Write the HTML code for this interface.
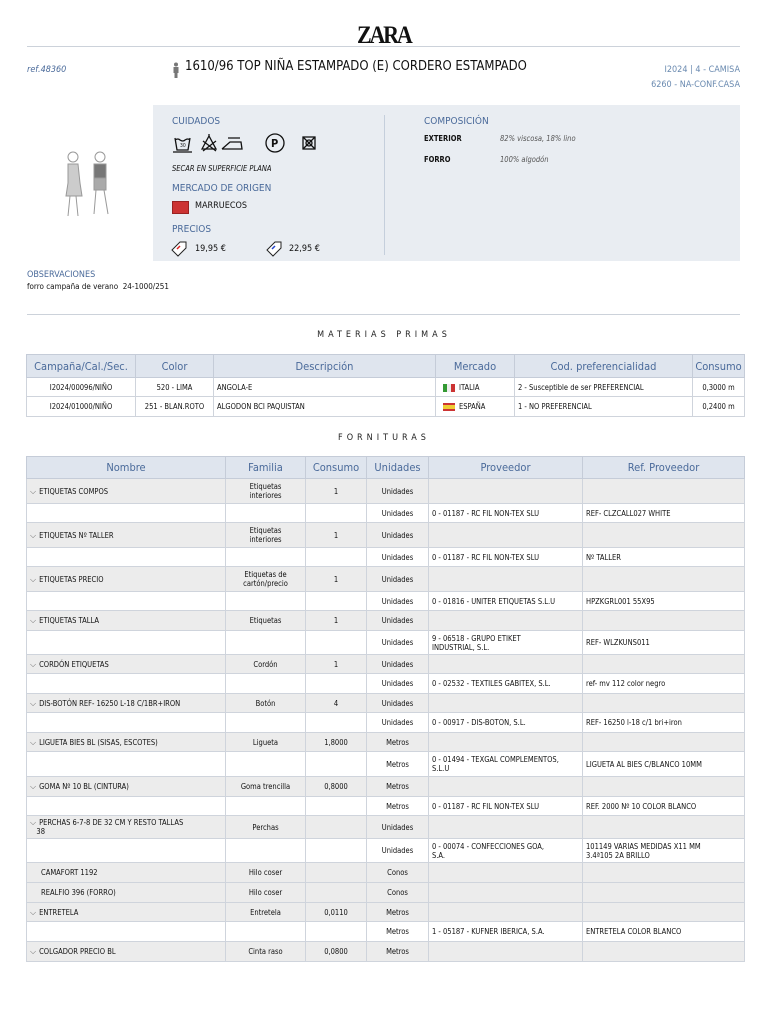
<!DOCTYPE html>
<html><head><meta charset="utf-8"><style>
body{margin:0;background:#fff;font-family:"DejaVu Sans Condensed","DejaVu Sans","Liberation Sans",sans-serif;font-stretch:condensed;color:#111;width:768px;height:1024px;position:relative;overflow:hidden}
.a{position:absolute}
.blue{color:#4a6a9a}
table{border-collapse:collapse;table-layout:fixed;position:absolute;left:26px;width:718px;font-size:7.5px}
td,th{border:1px solid #cfd4dc;padding:0 3px;overflow:hidden;line-height:9px}
th{background:#dfe5ee;color:#4a6a9a;font-weight:normal;font-size:11px;text-align:center;border-color:#c5ccd8;padding:0;white-space:nowrap}
tr.g td{background:#ececec}
.c{text-align:center}
.sec{position:absolute;left:0;width:768px;text-align:center;font-size:9px;letter-spacing:4px;color:#222}
.ar{color:#666;margin-right:3px;font-size:8px}
</style></head><body>
<div class="a" style="left:357px;top:22px;font-family:'Liberation Serif',serif;font-size:25px;letter-spacing:-2.5px;transform:scaleX(0.88);transform-origin:left;font-weight:bold">ZARA</div>
<div class="a" style="left:27px;top:46px;width:713px;height:1px;background:#ccd2da"></div>
<div class="a blue" style="left:27px;top:65px;font-size:9px;font-style:italic">ref.48360</div>
<svg class="a" style="left:172px;top:62px" width="8" height="16"><circle cx="4" cy="2.5" r="2" fill="#777"/><rect x="1.5" y="5" width="5" height="6" fill="#777"/><rect x="2.5" y="10" width="3" height="6" fill="#777"/></svg>
<div class="a" style="left:185px;top:59px;font-size:13px;color:#111">1610/96 TOP NIÑA ESTAMPADO (E) CORDERO ESTAMPADO</div>
<div class="a blue" style="right:28px;top:63px;font-size:9px;text-align:right;line-height:15px;color:#6a8ab0">I2024 | 4 - CAMISA<br>6260 - NA-CONF.CASA</div>
<svg class="a" style="left:58px;top:148px" width="60" height="70"><g fill="none" stroke="#999" stroke-width="1"><circle cx="15" cy="9" r="5"/><path d="M10 16 L20 16 L22 35 L24 48 L8 48 L10 35Z" fill="#ccc"/><path d="M12 48 L10 68 M18 48 L20 68"/><circle cx="42" cy="9" r="5"/><path d="M36 16 L48 16 L48 30 L36 30Z" fill="#777"/><path d="M36 30 L48 30 L48 42 L36 42Z" fill="#aaa"/><path d="M38 42 L36 66 M46 42 L50 66"/></g></svg>
<div class="a" style="left:153px;top:105px;width:587px;height:156px;background:#e9edf2"></div>
<div class="a" style="left:384px;top:115px;width:1px;height:140px;background:#c5cfdc"></div>
<div class="a blue" style="left:172px;top:116px;font-size:10px">CUIDADOS</div>
<svg class="a" style="left:172px;top:133px" width="150" height="24" fill="none" stroke="#111" stroke-width="1.3"><path d="M3 5 L5 17 L16 17 L18 5 M3 7 Q6 5 8 7 Q11 9 13 7 Q16 5 18 7"/><text x="8" y="14" font-size="5" fill="#111" stroke="none">30</text><path d="M1 19 L20 19"/><path d="M30 16 L37 3 L44 16Z M31 8 L44 18 M44 8 L31 18 M37 1 L37 3"/><path d="M50 16 L70 16 L69 9 L58 9 L50 16 M56 5 L68 5"/><circle cx="103" cy="10" r="9"/><text x="99" y="14" font-size="11" font-weight="bold" fill="#111" stroke="none">P</text><rect x="131" y="4" width="12" height="12"/><path d="M131 4 L143 16 M143 4 L131 16"/><circle cx="137" cy="10" r="3"/></svg>
<div class="a" style="left:172px;top:164px;font-size:7.5px;font-style:italic">SECAR EN SUPERFICIE PLANA</div>
<div class="a blue" style="left:172px;top:183px;font-size:10px">MERCADO DE ORIGEN</div>
<div class="a" style="left:172px;top:201px;width:15px;height:11px;background:#c33;border:1px solid #922"></div>
<div class="a" style="left:195px;top:201px;font-size:9px">MARRUECOS</div>
<div class="a blue" style="left:172px;top:224px;font-size:10px">PRECIOS</div>
<svg class="a" style="left:171px;top:241px" width="16" height="16"><path d="M1 9 L9 1 L15 1 L15 7 L7 15Z" fill="#fff" stroke="#222"/><path d="M6 8 L9 5" stroke="#d22" stroke-width="1.5"/></svg>
<div class="a" style="left:195px;top:244px;font-size:9px">19,95 €</div>
<svg class="a" style="left:266px;top:241px" width="16" height="16"><path d="M1 9 L9 1 L15 1 L15 7 L7 15Z" fill="#fff" stroke="#222"/><path d="M6 8 L9 5" stroke="#24c" stroke-width="1.5"/></svg>
<div class="a" style="left:289px;top:244px;font-size:9px">22,95 €</div>
<div class="a blue" style="left:424px;top:116px;font-size:10px">COMPOSICIÓN</div>
<div class="a" style="left:424px;top:134px;font-size:7.5px;font-weight:bold">EXTERIOR</div>
<div class="a" style="left:500px;top:134px;font-size:7.5px;font-style:italic;color:#555">82% viscosa, 18% lino</div>
<div class="a" style="left:424px;top:155px;font-size:7.5px;font-weight:bold">FORRO</div>
<div class="a" style="left:500px;top:155px;font-size:7.5px;font-style:italic;color:#555">100% algodón</div>
<div class="a blue" style="left:27px;top:270px;font-size:9px">OBSERVACIONES</div>
<div class="a" style="left:27px;top:282px;font-size:8px">forro campaña de verano &nbsp;24-1000/251</div>
<div class="a" style="left:27px;top:314px;width:713px;height:1px;background:#ccd2da"></div>
<div class="sec" style="top:330px">MATERIAS PRIMAS</div>
<table style="top:354px">
<colgroup><col style="width:109px"><col style="width:78px"><col style="width:222px"><col style="width:79px"><col style="width:178px"><col style="width:52px"></colgroup>
<tr style="height:23px"><th>Campaña/Cal./Sec.</th><th>Color</th><th>Descripción</th><th>Mercado</th><th>Cod. preferencialidad</th><th>Consumo</th></tr>
<tr style="height:19px"><td class="c">I2024/00096/NIÑO</td><td class="c">520 - LIMA</td><td>ANGOLA-E</td><td><span style="display:inline-block;width:12px;height:8px;background:linear-gradient(90deg,#393 33%,#eee 33% 66%,#c33 66%);vertical-align:middle;margin:0 4px"></span>ITALIA</td><td>2 - Susceptible de ser PREFERENCIAL</td><td class="c">0,3000 m</td></tr>
<tr style="height:20px"><td class="c">I2024/01000/NIÑO</td><td class="c">251 - BLAN.ROTO</td><td>ALGODON BCI PAQUISTAN</td><td><span style="display:inline-block;width:12px;height:8px;background:linear-gradient(#c33 25%,#ec3 25% 75%,#c33 75%);vertical-align:middle;margin:0 4px"></span>ESPAÑA</td><td>1 - NO PREFERENCIAL</td><td class="c">0,2400 m</td></tr>
</table>
<div class="sec" style="top:433px">FORNITURAS</div>
<table style="top:456px">
<colgroup><col style="width:199px"><col style="width:80px"><col style="width:61px"><col style="width:62px"><col style="width:154px"><col style="width:162px"></colgroup>
<tr style="height:22px"><th>Nombre</th><th>Familia</th><th>Consumo</th><th>Unidades</th><th>Proveedor</th><th>Ref. Proveedor</th></tr>
<tr class="g" style="height:25px"><td><span class="ar">⌵</span>ETIQUETAS COMPOS</td><td class="c">Etiquetas<br>interiores</td><td class="c">1</td><td class="c">Unidades</td><td></td><td></td></tr>
<tr style="height:19px"><td></td><td></td><td></td><td class="c">Unidades</td><td>0 - 01187 - RC FIL NON-TEX SLU</td><td>REF- CLZCALL027 WHITE</td></tr>
<tr class="g" style="height:25px"><td><span class="ar">⌵</span>ETIQUETAS Nº TALLER</td><td class="c">Etiquetas<br>interiores</td><td class="c">1</td><td class="c">Unidades</td><td></td><td></td></tr>
<tr style="height:19px"><td></td><td></td><td></td><td class="c">Unidades</td><td>0 - 01187 - RC FIL NON-TEX SLU</td><td>Nº TALLER</td></tr>
<tr class="g" style="height:25px"><td><span class="ar">⌵</span>ETIQUETAS PRECIO</td><td class="c">Etiquetas de<br>cartón/precio</td><td class="c">1</td><td class="c">Unidades</td><td></td><td></td></tr>
<tr style="height:19px"><td></td><td></td><td></td><td class="c">Unidades</td><td>0 - 01816 - UNITER ETIQUETAS S.L.U</td><td>HPZKGRL001 55X95</td></tr>
<tr class="g" style="height:20px"><td><span class="ar">⌵</span>ETIQUETAS TALLA</td><td class="c">Etiquetas</td><td class="c">1</td><td class="c">Unidades</td><td></td><td></td></tr>
<tr style="height:24px"><td></td><td></td><td></td><td class="c">Unidades</td><td>9 - 06518 - GRUPO ETIKET<br>INDUSTRIAL, S.L.</td><td>REF- WLZKUNS011</td></tr>
<tr class="g" style="height:19px"><td><span class="ar">⌵</span>CORDÓN ETIQUETAS</td><td class="c">Cordón</td><td class="c">1</td><td class="c">Unidades</td><td></td><td></td></tr>
<tr style="height:20px"><td></td><td></td><td></td><td class="c">Unidades</td><td>0 - 02532 - TEXTILES GABITEX, S.L.</td><td>ref- mv 112 color negro</td></tr>
<tr class="g" style="height:19px"><td><span class="ar">⌵</span>DIS-BOTÓN REF- 16250 L-18 C/1BR+IRON</td><td class="c">Botón</td><td class="c">4</td><td class="c">Unidades</td><td></td><td></td></tr>
<tr style="height:20px"><td></td><td></td><td></td><td class="c">Unidades</td><td>0 - 00917 - DIS-BOTON, S.L.</td><td>REF- 16250 l-18 c/1 bri+iron</td></tr>
<tr class="g" style="height:19px"><td><span class="ar">⌵</span>LIGUETA BIES BL (SISAS, ESCOTES)</td><td class="c">Ligueta</td><td class="c">1,8000</td><td class="c">Metros</td><td></td><td></td></tr>
<tr style="height:25px"><td></td><td></td><td></td><td class="c">Metros</td><td>0 - 01494 - TEXGAL COMPLEMENTOS,<br>S.L.U</td><td>LIGUETA AL BIES C/BLANCO 10MM</td></tr>
<tr class="g" style="height:20px"><td><span class="ar">⌵</span>GOMA Nº 10 BL (CINTURA)</td><td class="c">Goma trencilla</td><td class="c">0,8000</td><td class="c">Metros</td><td></td><td></td></tr>
<tr style="height:19px"><td></td><td></td><td></td><td class="c">Metros</td><td>0 - 01187 - RC FIL NON-TEX SLU</td><td>REF. 2000 Nº 10 COLOR BLANCO</td></tr>
<tr class="g" style="height:23px"><td><span class="ar">⌵</span>PERCHAS 6-7-8 DE 32 CM Y RESTO TALLAS<br>&nbsp;&nbsp;&nbsp;38</td><td class="c">Perchas</td><td></td><td class="c">Unidades</td><td></td><td></td></tr>
<tr style="height:24px"><td></td><td></td><td></td><td class="c">Unidades</td><td>0 - 00074 - CONFECCIONES GOA,<br>S.A.</td><td>101149 VARIAS MEDIDAS X11 MM<br>3.4ª105 2A BRILLO</td></tr>
<tr class="g" style="height:20px"><td style="padding-left:14px">CAMAFORT 1192</td><td class="c">Hilo coser</td><td></td><td class="c">Conos</td><td></td><td></td></tr>
<tr class="g" style="height:20px"><td style="padding-left:14px">REALFIO 396 (FORRO)</td><td class="c">Hilo coser</td><td></td><td class="c">Conos</td><td></td><td></td></tr>
<tr class="g" style="height:19px"><td><span class="ar">⌵</span>ENTRETELA</td><td class="c">Entretela</td><td class="c">0,0110</td><td class="c">Metros</td><td></td><td></td></tr>
<tr style="height:20px"><td></td><td></td><td></td><td class="c">Metros</td><td>1 - 05187 - KUFNER IBERICA, S.A.</td><td>ENTRETELA COLOR BLANCO</td></tr>
<tr class="g" style="height:20px"><td><span class="ar">⌵</span>COLGADOR PRECIO BL</td><td class="c">Cinta raso</td><td class="c">0,0800</td><td class="c">Metros</td><td></td><td></td></tr>
</table>
</body></html>
